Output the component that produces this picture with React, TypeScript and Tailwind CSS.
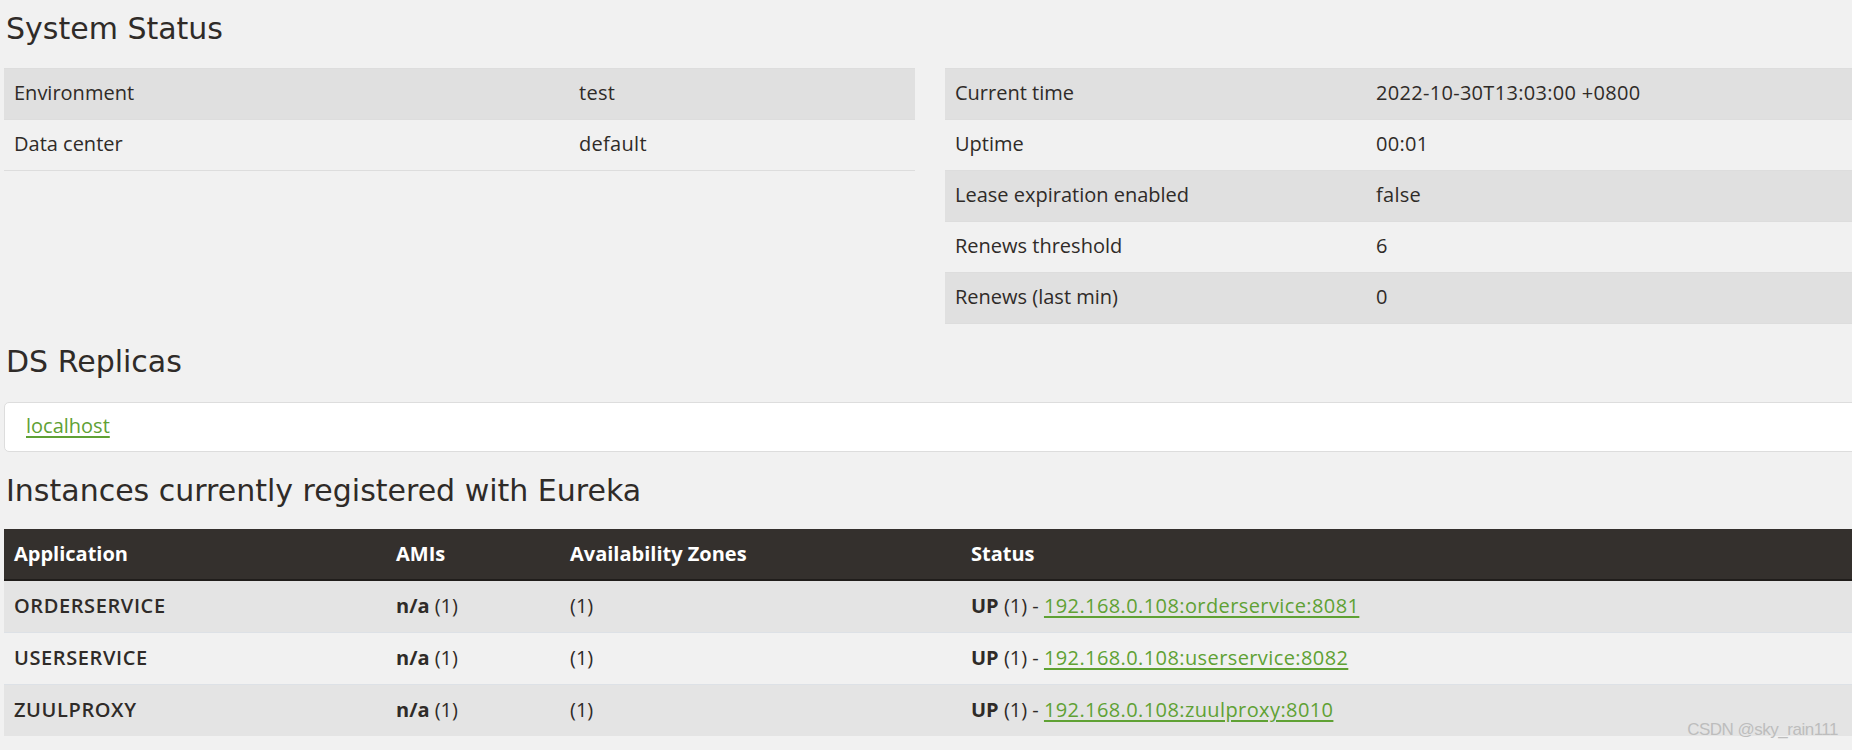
const leftRows = [
  ["Environment", "test"],
  ["Data center", "default"],
];

const rightRows = [
  ["Current time", "2022-10-30T13:03:00 +0800"],
  ["Uptime", "00:01"],
  ["Lease expiration enabled", "false"],
  ["Renews threshold", "6"],
  ["Renews (last min)", "0"],
];

const instances = [
  { app: "ORDERSERVICE", link: "192.168.0.108:orderservice:8081" },
  { app: "USERSERVICE", link: "192.168.0.108:userservice:8082" },
  { app: "ZUULPROXY", link: "192.168.0.108:zuulproxy:8010" },
];

function Heading({ children }: { children: React.ReactNode }) {
  return (
    <h1 className="font-['DejaVu_Sans',sans-serif] text-[30px] leading-[40px] text-[#2f2b28] pl-[2px]">
      {children}
    </h1>
  );
}

function InfoTable({ rows, firstCol }: { rows: string[][]; firstCol: string }) {
  return (
    <table className="w-full border-collapse border-b border-[#dddddd]">
      <tbody>
        {rows.map(([k, v], i) => (
          <tr key={k} className={i % 2 === 0 ? "bg-[#e0e0e0]" : ""}>
            <td className={`${firstCol} border-t border-[#dddddd] px-[10px] pt-[9px] pb-[11px] leading-[30px]`}>{k}</td>
            <td className="border-t border-[#dddddd] px-[10px] pt-[9px] pb-[11px] leading-[30px] tracking-[0.3px]">{v}</td>
          </tr>
        ))}
      </tbody>
    </table>
  );
}

export default function App() {
  return (
    <div className="relative min-h-[750px] bg-[#f1f1f1] font-['Open_Sans',sans-serif] text-[20px] text-[#2f2b28] pl-[4px] overflow-hidden">
      <div className="pt-[9px]">
        <Heading>System Status</Heading>
      </div>
      <div className="mt-[19px] flex gap-[30px]">
        <div className="w-[911px] shrink-0">
          <InfoTable rows={leftRows} firstCol="w-[565px]" />
        </div>
        <div className="w-[912px] shrink-0">
          <InfoTable rows={rightRows} firstCol="w-[421px]" />
        </div>
      </div>

      <div className="mt-[18px]">
        <Heading>DS Replicas</Heading>
      </div>
      <div className="mt-[20px] mr-[-10px] bg-white border border-[#dddddd] rounded-[5px] px-[21px] pt-[8px] pb-[10px] leading-[30px]">
        <a href="#" className="text-[#5fa134] underline underline-offset-[3px]">localhost</a>
      </div>

      <div className="mt-[19px]">
        <Heading>Instances currently registered with Eureka</Heading>
      </div>
      <table className="mt-[18px] w-[1858px] border-collapse">
        <thead>
          <tr className="bg-[#34302d] text-white">
            <th className="w-[382px] text-left font-bold px-[10px] py-[10px] leading-[30px] border-b-[2px] border-[#201d1b]">Application</th>
            <th className="w-[174px] text-left font-bold px-[10px] py-[10px] leading-[30px] border-b-[2px] border-[#201d1b]">AMIs</th>
            <th className="w-[401px] text-left font-bold px-[10px] py-[10px] leading-[30px] border-b-[2px] border-[#201d1b]">Availability Zones</th>
            <th className="text-left font-bold px-[10px] py-[10px] leading-[30px] border-b-[2px] border-[#201d1b]">Status</th>
          </tr>
        </thead>
        <tbody>
          {instances.map((r, i) => (
            <tr key={r.app} className={i % 2 === 0 ? "bg-[#e4e4e4]" : "bg-[#f1f1f1]"}>
              <td className="border-t border-[#dde1e6] px-[10px] pt-[10px] pb-[11px] leading-[30px] font-semibold tracking-[0.6px]">{r.app}</td>
              <td className="border-t border-[#dde1e6] px-[10px] pt-[10px] pb-[11px] leading-[30px]">
                <b>n/a</b> (1)
              </td>
              <td className="border-t border-[#dde1e6] px-[10px] pt-[10px] pb-[11px] leading-[30px]">(1)</td>
              <td className="border-t border-[#dde1e6] px-[10px] pt-[10px] pb-[11px] leading-[30px]">
                <b>UP</b> (1) -{" "}
                <a href="#" className="text-[#5fa134] underline underline-offset-[3px] tracking-[0.4px]">{r.link}</a>
              </td>
            </tr>
          ))}
        </tbody>
      </table>

      <div className="absolute right-[14px] bottom-[8px] font-['Liberation_Sans',sans-serif] text-[17px] text-[#bdbdbd] tracking-[-0.5px]">
        CSDN @sky_rain111
      </div>
    </div>
  );
}
